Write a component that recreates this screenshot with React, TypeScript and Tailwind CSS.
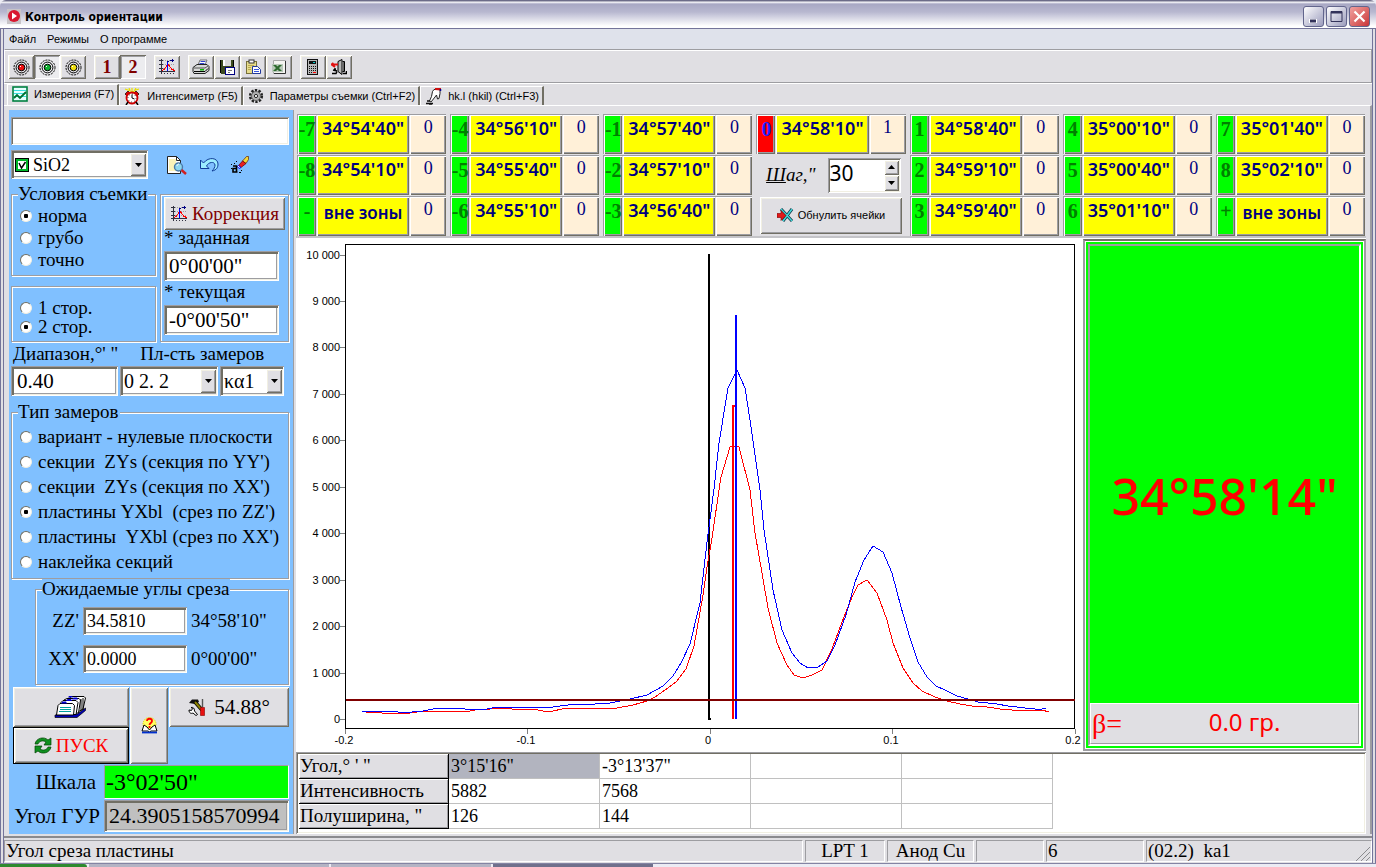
import type { ReactNode } from "react";

const RAISED =
  "bg-[#e0dfe3] shadow-[inset_1px_1px_0_#ffffff,inset_-1px_-1px_0_#716f64,inset_2px_2px_0_#f1efe2,inset_-2px_-2px_0_#9d9da1]";
const PRESSED =
  "bg-[#ececef] shadow-[inset_1px_1px_0_#716f64,inset_-1px_-1px_0_#ffffff,inset_2px_2px_0_#9d9da1]";
const SUNKEN =
  "shadow-[inset_1px_1px_0_#9d9da1,inset_-1px_-1px_0_#ffffff,inset_2px_2px_0_#716f64,inset_-2px_-2px_0_#f1efe2]";
const FIELD =
  "shadow-[inset_1px_1px_0_#9d9da1,inset_-1px_-1px_0_#ffffff,inset_3px_3px_0_#716f64,inset_-2px_-2px_0_#f1efe2,inset_-3px_-3px_0_#9d9da1]";
const ETCHED = "border border-[#9d9da1] shadow-[1px_1px_0_#ffffff,inset_1px_1px_0_#ffffff]";
const SERIF = "font-['Liberation_Serif',serif]";
const ROUND = "font-['Noto_Sans',sans-serif]";

/* ---------- icons ---------- */

function Target({ color }: { color: string }) {
  return (
    <svg width="17" height="17" viewBox="0 0 17 17" fill="none" stroke="#000">
      <circle cx="8.5" cy="8.5" r="7.5" strokeDasharray="2 1" />
      <circle cx="8.5" cy="8.5" r="5.4" />
      <circle cx="8.5" cy="8.5" r="3.3" fill={color} />
      <path d="M7 8l1-1" stroke="#fff" />
    </svg>
  );
}

function GraphIcon() {
  return (
    <svg width="18" height="18" viewBox="0 0 18 18" fill="none" shapeRendering="crispEdges">
      <path d="M5 2.500h12M5 6.500h12M5 10.500h12" stroke="#a0a0a8" strokeDasharray="1 1" />
      <path d="M3.500 1v15M1 13.500h16M1 2.500h4M1 6.500h4M1 10.500h4" stroke="#303040" />
      <path d="M6.500 13v4M9.500 13v4M12.500 13v4M15.500 13v4" stroke="#303040" strokeDasharray="1 1" />
      <path d="M4 12.500l2-1 4-5.500 4 5.500 3 1" stroke="#f00" />
      <path d="M9.500 3v10" stroke="#00f" />
      <path d="M8.500 3.500h2M12 2.500h4M14.500 1v3" stroke="#000080" />
    </svg>
  );
}

function PrinterIcon() {
  return (
    <svg width="18" height="16" viewBox="0 0 18 16">
      <path d="M6 6l2-5h7l-2 5z" fill="#fff" stroke="#777" />
      <path d="M8.500 2.500h5M7.500 4.500h5" stroke="#3344cc" />
      <path d="M1 8.500l4-3h10l2 2v4l-4 3H2l-1-2z" fill="#d8d8d8" stroke="#222" />
      <path d="M2 9h11l3-2" fill="none" stroke="#555" />
      <path d="M2 12.500h11l3-3" fill="none" stroke="#000" />
      <rect x="8" y="10" width="4" height="1.500" fill="#0b0" />
    </svg>
  );
}

function SaveIcon() {
  return (
    <svg width="17" height="17" viewBox="0 0 17 17" shapeRendering="crispEdges">
      <path d="M1 1h14v14H2l-1-1z" fill="#3c4a1e" />
      <path d="M1 1h1v13H1zM14 1h1v8h-1z" fill="#000" />
      <rect x="4" y="1" width="8" height="6" fill="#d8d8d8" />
      <rect x="4" y="1" width="2" height="6" fill="#fff" />
      <rect x="6" y="8" width="10" height="8" fill="#000080" />
      <rect x="7" y="9" width="8" height="6" fill="#fff" />
      <path d="M9 11h4v1H9zM9 13h2v1H9z" fill="#777" />
    </svg>
  );
}

function PasteIcon() {
  return (
    <svg width="17" height="16" viewBox="0 0 17 16">
      <rect x="1.500" y="2.500" width="10" height="12" fill="#e6dc8c" stroke="#77703a" />
      <rect x="4" y="1" width="5" height="3" fill="#fff" stroke="#333" />
      <path d="M3 6.500h6M3 8.500h3M3 10.500h3" stroke="#b8a850" />
      <path d="M7.500 7.500h5l3 3v4h-8z" fill="#fff" stroke="#223a9c" />
      <path d="M9 10.500h5M9 12.500h5" stroke="#3355dd" />
    </svg>
  );
}

function ExcelIcon() {
  return (
    <svg width="16" height="16" viewBox="0 0 16 16">
      <path d="M2.500 1.500h12v13h-12z" fill="#f4f4f0" stroke="#a8a8a8" />
      <path d="M14.500 2v12.500H3" fill="none" stroke="#333" />
      <rect x="1" y="5" width="11" height="8" fill="#b8c8b8" />
      <path d="M2 6h3l6 6H8zM8 6h3l-6 6H2z" fill="#2e6b2e" />
    </svg>
  );
}

function CalcIcon() {
  return (
    <svg width="12" height="17" viewBox="0 0 12 17" shapeRendering="crispEdges">
      <rect width="11" height="16" fill="#111" />
      <rect x="1" y="1" width="9" height="14" fill="#b8b8b8" />
      <rect x="2" y="2" width="7" height="3" fill="#111" />
      <rect x="6" y="3" width="2" height="1" fill="#0cc" />
      <path d="M2 7.500h8M2 9.500h8M2 11.500h8M2 13.500h4" stroke="#111" strokeDasharray="1 1" />
      <rect x="6" y="13" width="3" height="1" fill="#f00" />
    </svg>
  );
}

function ExitIcon() {
  return (
    <svg width="16" height="16" viewBox="0 0 16 16">
      <path d="M7 2.500l4-2v15l-4-3z" fill="#b8b8b8" stroke="#000" />
      <path d="M11.500 2.500h2v10h-2" fill="#666" stroke="#000" />
      <path d="M0 5.500h7M2.500 4l-2 1.500L4 8" stroke="#e01010" strokeWidth="2" fill="none" />
      <path d="M1 14.500h4l1-2M2 11l4 1M4 9v3M12 14.500h3.500V12" stroke="#000" strokeWidth="1.500" fill="none" />
    </svg>
  );
}

function MeasureIcon() {
  return (
    <svg width="16" height="16" viewBox="0 0 16 16" fill="none">
      <rect x="1" y="1" width="14" height="14" fill="#e6ffff" stroke="#008040" strokeWidth="1.600" />
      <path d="M2 4.500h12M2 7.500h12M2 10.500h12" stroke="#38e0e0" />
      <path d="M2 12l3-3 3 3 6-6" stroke="#007030" strokeWidth="1.800" />
    </svg>
  );
}

function AlarmIcon() {
  return (
    <svg width="17" height="17" viewBox="0 0 17 17">
      <path d="M1 1l14 5M3 5l12-4M8 0v5M5 0l2 5M12 0l-3 5" stroke="#e8e000" strokeWidth="1.200" />
      <path d="M1 6l3-3 2 2-3 3zM15 6l-3-3-2 2 3 3z" fill="#e00000" stroke="#000" strokeWidth=".7" />
      <circle cx="8" cy="10" r="5.500" fill="#fff" stroke="#d00000" strokeWidth="1.800" />
      <path d="M8 6.500V10l2.500 1" stroke="#000" fill="none" />
      <circle cx="8" cy="10" r="4" fill="none" stroke="#000" strokeDasharray=".7 2.400" />
      <path d="M4 14l-2 3M12 14l2 3" stroke="#000" strokeWidth="1.500" />
    </svg>
  );
}

function GearIcon() {
  return (
    <svg width="16" height="16" viewBox="0 0 16 16" fill="none">
      <circle cx="8" cy="8" r="5.600" stroke="#222" strokeWidth="3" strokeDasharray="2.200 1.320" />
      <circle cx="8" cy="8" r="4.500" fill="#b0b0b0" stroke="#666" />
      <circle cx="8" cy="8" r="1.600" fill="#fff" stroke="#222" />
    </svg>
  );
}

function HandIcon() {
  return (
    <svg width="17" height="17" viewBox="0 0 17 17" fill="none">
      <path d="M9 1.500h6v4l-1 5-1.500.5-1-4-1.500 2-4 5-1.500-1 2-4.500 1-5z" fill="#fff" stroke="#222" />
      <path d="M10 0h6v2.500l-6-.5z" fill="#d01010" />
      <path d="M15.500 1v2" stroke="#000090" strokeWidth="1.500" />
      <path d="M1 15.500h7M2 13h3M4 16h3" stroke="#111" strokeWidth="1.400" />
    </svg>
  );
}

function CheckBoxIcon() {
  return (
    <svg width="14" height="14" viewBox="0 0 14 14">
      <rect x=".5" y=".5" width="13" height="13" fill="#fff" stroke="#000" />
      <rect x="2" y="2" width="10" height="10" fill="#fff" stroke="#00b828" strokeWidth="2" />
      <path d="M4 5l2.500 5L10.500 4" fill="none" stroke="#000" strokeWidth="1.500" />
    </svg>
  );
}

function PreviewIcon() {
  return (
    <svg width="22" height="20" viewBox="0 0 22 20">
      <path d="M1.500 1.500h9l4 4v13h-13z" fill="#fff" stroke="#222" />
      <path d="M3 4h7v12H3z" fill="#fbf3b8" />
      <path d="M10.500 1.500v4h4" fill="none" stroke="#222" />
      <circle cx="12.500" cy="12" r="4" fill="#8fd8f0" stroke="#4a7aa8" strokeWidth="1.400" />
      <path d="M11 11c0-1 1-2 2-2" stroke="#fff" fill="none" />
      <path d="M15.500 15l4.500 4" stroke="#d02020" strokeWidth="2.400" />
    </svg>
  );
}

function UndoIcon() {
  return (
    <svg width="20" height="18" viewBox="0 0 20 18">
      <path d="M1.500 4v8.500h8.500L7.500 10c2-4 8-5 8.500-1 0 2-1 4-3 6 5-1 6-4 6-7 0-6-9-8-14.500-1z" fill="#9cecff" stroke="#103c98" />
    </svg>
  );
}

function EraseIcon() {
  return (
    <svg width="19" height="18" viewBox="0 0 19 18">
      <path d="M12.500 5l4-4.500h2v3L16 7.500z" fill="#f4d838" stroke="#602000" strokeWidth=".7" />
      <path d="M8.500 9.500L12.500 5 16 7.500l-5 4z" fill="#e82020" stroke="#600" strokeWidth=".7" />
      <path d="M8.500 9.500l-1 1 1.500 2 2-1z" fill="#fff" stroke="#00f" />
      <path d="M3 10h3.500v6M6 12.500H3V16h4.500" fill="none" stroke="#000" strokeWidth="1.600" />
      <path d="M1 8.500h1M4 7.500h1M9 16.500h2M11 14.500h1M1 12.500h1M6 5.500h1" stroke="#000" />
    </svg>
  );
}

function CardsIcon() {
  return (
    <svg width="34" height="24" viewBox="0 0 34 24">
      <path d="M1 20v2.500h22l8.500-7V13l-8 6z" fill="#0000b8" stroke="#000" strokeWidth=".7" />
      <path d="M14 5.500L17 1.500h13l1.500 1.500-2.500 11-7 4z" fill="#fff" stroke="#000" />
      <path d="M10 5l3-1.500h12l1.500 1.500-2 13H16z" fill="#fff" stroke="#000" />
      <path d="M7 7.500l2-2h13l2 2-2 12H8z" fill="#fff" stroke="#000" />
      <path d="M2.500 20L4 10.500l2-2h12.500l2 2-1 9.500z" fill="#fff" stroke="#000" />
      <path d="M29 3v12M27 4v12" stroke="#000" />
      <path d="M6 12.500h11M6 14.500h11M5 16.500h12" stroke="#00a0a0" strokeWidth="1.200" />
      <path d="M7 8.500h6l-1-2H8.500zM12 6h6l-1-2h-3.500zM18 4.500h6l-1-2h-3.500zM14 2.500h5l-1-1.500h-3z" fill="#0000d0" />
    </svg>
  );
}

function RefreshIcon() {
  return (
    <svg width="18" height="17" viewBox="0 0 18 17">
      <path d="M1 7c1-6 9-8 13-4l3-2v7h-7l2-3C9 3 5 4 4 7z" fill="#109020" stroke="#004400" strokeWidth=".7" />
      <path d="M17 10c-1 6-9 8-13 4l-3 2V9h7l-2 3c3 2 7 1 8-2z" fill="#109020" stroke="#004400" strokeWidth=".7" />
    </svg>
  );
}

function HelpBookIcon() {
  return (
    <svg width="17" height="17" viewBox="0 0 17 17">
      <circle cx="8.500" cy="7" r="6.500" fill="#ffff60" stroke="#d8d000" strokeDasharray="1 1" />
      <path d="M3 8l-2 6h6l1.500 1 1.500-1h6l-2-6-3 2-2.500 3L6 10z" fill="#fff" stroke="#000" />
      <path d="M1 15.500h15" stroke="#0030d0" strokeWidth="1.800" />
      <path d="M6 4c0-3 5-3 5 0 0 2-2.500 2-2.500 4M8.500 9v2" fill="none" stroke="#f00" strokeWidth="1.800" />
    </svg>
  );
}

function ToolsIcon() {
  return (
    <svg width="18" height="18" viewBox="0 0 18 18">
      <path d="M1 5l3-3.500h6l1 2.500-4 2z" fill="#111" />
      <path d="M7 4l7 8" stroke="#000" strokeWidth="3.600" />
      <path d="M7 4l7 8" stroke="#8a8000" strokeWidth="2" />
      <path d="M14.500 1v8" stroke="#555" strokeWidth="1.400" />
      <path d="M12.500 9.500h4v8h-4z" fill="#e81010" stroke="#800" strokeWidth=".6" />
      <path d="M3 9.500l1.500 1-1 2L1 12c0 3 2 4 4 3l3 2.500 1.500-1L6.500 13c0-3-1.500-4-3.500-3.500z" fill="#fff" stroke="#000" />
    </svg>
  );
}

function ClearIcon() {
  return (
    <svg width="17" height="15" viewBox="0 0 17 15">
      <path d="M4 1l11 12M15 1L6 13" stroke="#134" strokeWidth="3" />
      <path d="M4 1l11 12M15 1L6 13" stroke="#40d8d8" strokeWidth="1.500" />
      <path d="M0 5.500h4V2.500l5 5-5 5v-3H0z" fill="#e01818" stroke="#700" strokeWidth=".6" />
    </svg>
  );
}

function AppIcon() {
  return (
    <svg width="14" height="15" viewBox="0 0 14 15">
      <rect width="14" height="15" fill="#c8c4c8" />
      <circle cx="7" cy="7" r="6" fill="#d81830" />
      <path d="M5 3.500v7l5-3.500z" fill="#fff" />
    </svg>
  );
}

/* ---------- small controls ---------- */

function ToolButton({ label, pressed, children }: { label: string; pressed?: boolean; children: ReactNode }) {
  return (
    <button
      type="button"
      aria-label={label}
      aria-pressed={pressed}
      className={`flex h-6 w-[26px] items-center justify-center ${pressed ? PRESSED : RAISED}`}
    >
      {children}
    </button>
  );
}

function Radio({ name, label, checked, height }: { name: string; label: string; checked?: boolean; height: string }) {
  return (
    <label className={`flex items-center gap-[6px] whitespace-pre pl-2 ${height}`}>
      <input
        type="radio"
        name={name}
        defaultChecked={checked}
        className="size-3 shrink-0 appearance-none rounded-full border border-b-[#f1efe2] border-l-[#716f64] border-r-[#f1efe2] border-t-[#716f64] bg-white checked:bg-[radial-gradient(circle,#000_0_2px,#fff_2.5px)]"
      />
      {label}
    </label>
  );
}

function Combo({ label, value, width, text = "text-xl", lead }: { label: string; value: string; width: string; text?: string; lead?: ReactNode }) {
  return (
    <div className={`relative flex items-center bg-white ${width} ${FIELD}`}>
      {lead}
      <select aria-label={label} className={`h-[29px] w-full min-w-0 appearance-none bg-transparent pl-1 leading-none ${text}`}>
        <option>{value}</option>
      </select>
      <span className={`pointer-events-none absolute inset-y-[3px] right-[2px] flex w-4 items-center justify-center ${RAISED}`}>
        <svg width="7" height="4" viewBox="0 0 7 4">
          <path d="M0 0h7L3.500 4z" />
        </svg>
      </span>
    </div>
  );
}

/* ---------- side panel ---------- */

function SidePanel() {
  return (
    <aside className={`w-[285px] shrink-0 border-r border-[#9d9da1] bg-[#80c0ff] pb-px pl-[2px] pr-1 pt-[7px] text-[19px] leading-5 ${SERIF}`}>
      <input aria-label="Имя" className={`block h-7 w-full bg-white px-2 ${SUNKEN}`} />

      <div className="mt-[5px] flex h-[29px] items-center">
        <Combo label="Материал" value="SiO2" width="w-[137px]" text="text-lg" lead={<span className="ml-1 shrink-0"><CheckBoxIcon /></span>} />
        <div className="ml-[18px] flex items-center gap-[11px]">
          <button type="button" aria-label="Просмотр"><PreviewIcon /></button>
          <button type="button" aria-label="Отменить"><UndoIcon /></button>
          <button type="button" aria-label="Очистить"><EraseIcon /></button>
        </div>
      </div>

      <div className="mt-[5px] flex justify-between">
        <div className="w-[145px]">
          <fieldset className={`pb-1 pt-px ${ETCHED}`}>
            <legend className="relative ml-[6px] whitespace-nowrap bg-[#80c0ff] pr-px">Условия съемки</legend>
            <Radio name="mode" label="норма" checked height="h-[22px]" />
            <Radio name="mode" label="грубо" height="h-[22px]" />
            <Radio name="mode" label="точно" height="h-[22px]" />
          </fieldset>
          <div className={`mt-[10px] pb-[5px] pt-[11px] ${ETCHED}`}>
            <Radio name="side" label="1 стор." height="h-[19px]" />
            <Radio name="side" label="2 стор." checked height="h-[19px]" />
          </div>
        </div>
        <div className={`mt-[10px] w-[129px] px-[3px] pb-[6px] pt-[2px] ${ETCHED}`}>
          <button type="button" className={`flex h-[33px] w-full items-center justify-center gap-1 text-[#800000] ${RAISED}`}>
            <GraphIcon />
            Коррекция
          </button>
          <label className="block">
            <span className="block h-[17px] leading-4">* заданная</span>
            <input defaultValue={"0°00'00\""} className={`mt-1 block h-[30px] w-[115px] bg-white px-[5px] text-[21px] ${FIELD}`} />
          </label>
          <label className="mt-[3px] block">
            <span className="block h-[17px] leading-4">* текущая</span>
            <input defaultValue={"-0°00'50\""} className={`mt-1 block h-[30px] w-[115px] bg-white px-[5px] text-[21px] ${FIELD}`} />
          </label>
        </div>
      </div>

      <div className="mt-[2px] flex gap-[22px] pl-[2px]">
        <label htmlFor="range">Диапазон,°' "</label>
        <span>Пл-сть замеров</span>
      </div>
      <div className="mt-[2px] flex h-[30px] gap-[2px]">
        <input id="range" defaultValue="0.40" className={`w-[107px] bg-white px-[6px] text-[21px] ${FIELD}`} />
        <Combo label="Плоскость" value="0 2. 2" width="w-[98px]" />
        <Combo label="Линия" value="κα1" width="w-[64px]" />
      </div>

      <fieldset className={`mt-[6px] pb-1 pt-[2px] ${ETCHED}`}>
        <legend className="relative ml-[6px] bg-[#80c0ff] pr-px">Тип замеров</legend>
        <Radio name="kind" label="вариант - нулевые плоскости" height="h-[25px]" />
        <Radio name="kind" label="секции  ZYs (секция по YY')" height="h-[25px]" />
        <Radio name="kind" label="секции  ZYs (секция по XX')" height="h-[25px]" />
        <Radio name="kind" label="пластины YXbl  (срез по ZZ')" checked height="h-[25px]" />
        <Radio name="kind" label="пластины  YXbl (срез по XX')" height="h-[25px]" />
        <Radio name="kind" label="наклейка секций" height="h-[25px]" />
      </fieldset>

      <fieldset className={`ml-6 pb-[10px] pt-[7px] ${ETCHED}`}>
        <legend className="relative ml-[6px] bg-[#80c0ff] pr-px">Ожидаемые углы среза</legend>
        {[
          { id: "zz", name: "ZZ'", value: "34.5810", angle: "34°58'10\"" },
          { id: "xx", name: "XX'", value: "0.0000", angle: "0°00'00\"" },
        ].map((row) => (
          <div key={row.id} className="mb-2 flex h-[30px] items-center gap-1 last:mb-0">
            <label htmlFor={row.id} className="w-[43px] text-right">{row.name}</label>
            <input id={row.id} defaultValue={row.value} className={`h-7 w-[104px] bg-white px-1 text-lg ${FIELD}`} />
            <span>{row.angle}</span>
          </div>
        ))}
      </fieldset>

      <div className="mt-[2px] flex h-[77px] gap-px pl-[2px]">
        <div className="flex w-[116px] flex-col">
          <button type="button" aria-label="Картотека" className={`flex h-10 items-center justify-center ${RAISED}`}>
            <CardsIcon />
          </button>
          <button type="button" className={`flex h-[37px] items-center justify-center gap-1 border border-black text-[#ff0000] ${RAISED}`}>
            <RefreshIcon />
            ПУСК
          </button>
        </div>
        <button type="button" aria-label="Справка" className={`flex w-[38px] items-center justify-center ${RAISED}`}>
          <HelpBookIcon />
        </button>
        <button type="button" className={`flex h-10 flex-1 items-center justify-center gap-2 text-[21px] ${RAISED}`}>
          <ToolsIcon />
          54.88°
        </button>
      </div>

      <div className="mt-px flex items-center text-[21px]">
        <label htmlFor="scale" className="flex-1 pr-2 text-right">Шкала</label>
        <input id="scale" readOnly defaultValue={"-3°02'50\""} className="h-[34px] w-[185px] border border-b-white border-l-[#9d9da1] border-r-white border-t-[#9d9da1] bg-[#00ff00] px-px text-2xl" />
      </div>
      <div className="mt-px flex items-center text-[21px]">
        <label htmlFor="gur" className="flex-1 whitespace-nowrap pr-1 text-right">Угол ГУР</label>
        <input id="gur" readOnly defaultValue="24.3905158570994" className={`h-8 w-[185px] bg-[#c0c0c0] px-[5px] text-[22px] ${FIELD}`} />
      </div>
    </aside>
  );
}

/* ---------- counter cells ---------- */

function Cell({ id, angle, count = "0", active }: { id: string; angle: string; count?: string; active?: boolean }) {
  const isZone = angle === "вне зоны";
  return (
    <div className="flex h-10 min-w-0 gap-px border-l border-t border-[#9d9da1] text-[#000080]">
      <div className={`flex w-[18px] justify-center overflow-hidden pt-[2px] text-xl font-bold leading-6 ${SERIF} ${active ? "bg-[#ff0000] text-[#2020ff]" : "bg-[#00ff00] text-[#008000]"} shadow-[inset_1px_1px_0_#fff,inset_-1px_-1px_0_#716f64,inset_-2px_-2px_0_#9d9da1]`}>
        {id}
      </div>
      <div className={`flex min-w-0 flex-1 justify-center whitespace-nowrap bg-[#ffff00] font-semibold leading-6 ${isZone ? "pt-1 text-[17px]" : "pt-px text-lg leading-6"} ${ROUND} shadow-[inset_1px_1px_0_#fff,inset_-1px_-1px_0_#716f64,inset_-2px_-2px_0_#9d9da1]`}>
        {angle}
      </div>
      <div className={`flex w-9 justify-center bg-[#fff0d8] pt-[2px] text-lg leading-5 ${SERIF} shadow-[inset_1px_1px_0_#fff,inset_-1px_-1px_0_#716f64,inset_-2px_-2px_0_#9d9da1]`}>
        {count}
      </div>
    </div>
  );
}

function CounterGrid() {
  return (
    <div className="grid grid-cols-7 gap-x-1 gap-y-px border-b-2 border-[#c4c4c8] bg-[#e0dfe3] px-px pt-1">
      <Cell id="-7" angle={"34°54'40\""} />
      <Cell id="-4" angle={"34°56'10\""} />
      <Cell id="-1" angle={"34°57'40\""} />
      <Cell id="0" angle={"34°58'10\""} count="1" active />
      <Cell id="1" angle={"34°58'40\""} />
      <Cell id="4" angle={"35°00'10\""} />
      <Cell id="7" angle={"35°01'40\""} />

      <Cell id="-8" angle={"34°54'10\""} />
      <Cell id="-5" angle={"34°55'40\""} />
      <Cell id="-2" angle={"34°57'10\""} />
      <div className="flex items-center justify-end gap-3 pr-[5px]">
        <label htmlFor="step" className={`text-[19px] italic leading-5 ${SERIF}`}>
          <span className="underline">Ш</span>аг,"
        </label>
        <div className={`flex h-[35px] w-[73px] items-center bg-white p-[2px] ${SUNKEN}`}>
          <input id="step" defaultValue="30" className={`w-0 min-w-0 flex-1 pb-1 text-[21px] leading-none ${ROUND}`} />
          <div className="flex h-full w-[15px] flex-col">
            <button type="button" aria-label="Больше" className={`flex flex-1 items-center justify-center ${RAISED}`}>
              <svg width="7" height="4" viewBox="0 0 7 4"><path d="M0 4h7L3.500 0z" /></svg>
            </button>
            <button type="button" aria-label="Меньше" className={`flex flex-1 items-center justify-center ${RAISED}`}>
              <svg width="7" height="4" viewBox="0 0 7 4"><path d="M0 0h7L3.500 4z" /></svg>
            </button>
          </div>
        </div>
      </div>
      <Cell id="2" angle={"34°59'10\""} />
      <Cell id="5" angle={"35°00'40\""} />
      <Cell id="8" angle={"35°02'10\""} />

      <Cell id="-" angle="вне зоны" />
      <Cell id="-6" angle={"34°55'10\""} />
      <Cell id="-3" angle={"34°56'40\""} />
      <div className="py-px pl-1 pr-1">
        <button type="button" className={`flex h-[37px] w-full items-center justify-center gap-1 whitespace-nowrap text-[11px] ${RAISED}`}>
          <ClearIcon />
          Обнулить ячейки
        </button>
      </div>
      <Cell id="3" angle={"34°59'40\""} />
      <Cell id="6" angle={"35°01'10\""} />
      <Cell id="+" angle="вне зоны" />
    </div>
  );
}

/* ---------- chart ---------- */

const BLUE =
  "362,711 392,711 398,712 412,712 423,711 433,709 449,708 457,708 465,709 487,709 497,707 512,708 523,707 538,708 553,707 568,705 595,704 610,703 620,701 630,699 647,695 663,686 673,676 681,663 690,644 700,603 707,542 714,489 719,443 728,388 737,370 745,388 750,420 754,448 760,490 764,530 773,590 782,630 792,653 800,663 808,668 818,667 827,661 835,645 846,615 855,582 864,560 873,546 883,552 892,573 901,607 910,638 918,662 927,677 936,686 945,690 957,696 968,699 978,702 997,704 1008,706 1025,708 1035,709 1042,709 1046,708";
const RED =
  "366,713 378,712 382,713 397,713 410,713 417,712 435,711 470,711 475,710 490,709 503,708 512,709 533,709 543,711 553,711 562,709 580,708 617,708 633,705 647,701 655,697 665,690 676,682 686,669 694,646 703,595 707,567 712,538 719,490 721,477 730,447 733,446 739,447 750,490 755,533 762,573 768,608 777,643 787,665 794,675 803,678 812,675 822,670 832,649 842,622 852,597 858,585 867,580 877,593 887,620 893,643 903,668 913,683 922,691 935,697 947,701 960,704 972,706 987,707 1000,709 1012,710 1033,711 1042,710 1049,712";
const Y_TICKS = ["0", "1 000", "2 000", "3 000", "4 000", "5 000", "6 000", "7 000", "8 000", "9 000", "10 000"];
const X_TICKS = ["-0.2", "-0.1", "0", "0.1", "0.2"];

function Chart() {
  return (
    <svg viewBox="296 238 787 513" className="block min-w-0 flex-1 bg-white" role="img" aria-label="Интенсивность">
      <g fill="none" shapeRendering="crispEdges">
        <rect x="345.5" y="244.500" width="729" height="484" stroke="#000" />
        {Y_TICKS.map((t, i) => (
          <path key={t} d={`M340 ${Math.round(719 - i * 46.45) + 0.5}h5`} stroke="#808080" />
        ))}
        {X_TICKS.map((t, i) => (
          <path key={t} d={`M${Math.round(345 + i * 182.4) + 0.5} 729v5`} stroke="#808080" />
        ))}
        <path d="M709 254v465h2" stroke="#000" strokeWidth="2" />
        <polyline points={RED} stroke="#f00" />
        <polyline points={BLUE} stroke="#00f" />
        <path d="M735 406h-2v313" stroke="#f00" strokeWidth="2" />
        <path d="M736 315v404" stroke="#00f" strokeWidth="2" />
        <path d="M346 700h729" stroke="#800000" strokeWidth="2" />
      </g>
      <g className="font-['Liberation_Sans',sans-serif] text-[11px]">
        {Y_TICKS.map((t, i) => (
          <text key={t} x="340" y={Math.round(723 - i * 46.45)} textAnchor="end">{t}</text>
        ))}
        {X_TICKS.map((t, i) => (
          <text key={t} x={Math.round(344 + i * 182.2)} y="744" textAnchor="middle">{t}</text>
        ))}
      </g>
    </svg>
  );
}

/* ---------- result ---------- */

function Result() {
  return (
    <section className={`mt-px flex w-[283px] shrink-0 border-2 border-b-[#9d9da1] border-l-[#9d9da1] border-r-[#9d9da1] border-t-[#716f64] bg-white p-px text-[#ff0000] ${ROUND}`}>
      <div className="flex flex-1 flex-col border-2 border-[#00ff00]">
        <div className="flex flex-1 flex-col border-2 border-b-white border-l-[#9d9da1] border-r-white border-t-[#9d9da1]">
          <div className="flex flex-1 items-center justify-center whitespace-nowrap bg-[#00ff00] pt-11 text-[50px] font-medium">
            34°58'14"
          </div>
          <div className="flex h-[41px] items-center border border-b-[#9d9da1] border-l-white border-r-[#9d9da1] border-t-white bg-[#e0dfe3]">
            <span className={`w-11 pl-px text-[28px] leading-none ${SERIF}`}>β=</span>
            <span className="flex-1 pb-1 pr-1 text-center text-2xl leading-none">0.0 гр.</span>
          </div>
        </div>
      </div>
    </section>
  );
}

function PeakTable() {
  const rows = [
    ["Угол,° ' \"", "3°15'16\"", "-3°13'37\""],
    ["Интенсивность", "5882", "7568"],
    ["Полуширина, \"", "126", "144"],
  ];
  return (
    <div className={`mt-px h-[82px] bg-white py-[2px] pl-[3px] pr-[2px] ${SUNKEN}`}>
      <table className={`table-fixed border-separate border-spacing-0 text-lg leading-5 ${SERIF}`}>
        <tbody>
          {rows.map((row, r) => (
            <tr key={row[0]} className="h-[25px]">
              <th scope="row" className="w-[150px] whitespace-nowrap border-b border-r border-black bg-[#e0dfe3] px-px text-left text-[19px] font-normal leading-5 shadow-[inset_1px_1px_0_#fff,inset_-1px_-1px_0_#9d9da1]">
                {row[0]}
              </th>
              {[1, 2, 3, 4].map((c) => (
                <td key={c} className={`w-[151px] border-b border-r border-[#c0c0c0] px-[2px] ${r === 0 && c === 1 ? "bg-[#b2b4bf]" : ""}`}>
                  {row[c] ?? ""}
                </td>
              ))}
            </tr>
          ))}
        </tbody>
      </table>
    </div>
  );
}

/* ---------- window ---------- */

const CAPTION = "flex size-[21px] items-center justify-center rounded-[3px] border border-[#62658c]";

function TitleBar() {
  return (
    <header className="flex h-[29px] items-center gap-1 rounded-t-[6px] border-b border-[#74749a] bg-[linear-gradient(to_bottom,#6c6c88_0,#6c6c88_1px,#ffffff_2px,#a8a8c4_4px,#b8b8d0_12px,#ffffff_26px,#ffffff_28px)] pl-[7px] pr-[6px] pt-[5px]">
      <AppIcon />
      <h1 className="flex-1 font-['DejaVu_Sans_Condensed','DejaVu_Sans',sans-serif] text-xs font-bold">Контроль ориентации</h1>
      <div className="flex gap-[2px]">
        <button type="button" aria-label="Свернуть" className={`bg-linear-to-br from-white to-[#9c9cbc] ${CAPTION}`}>
          <svg width="15" height="15" viewBox="0 0 15 15"><path d="M3 12h8" stroke="#fff" strokeWidth="4" /><path d="M4 12h6" stroke="#33335a" strokeWidth="3" /></svg>
        </button>
        <button type="button" aria-label="Развернуть" className={`bg-linear-to-br from-white to-[#9c9cbc] ${CAPTION}`}>
          <svg width="15" height="15" viewBox="0 0 15 15" fill="none"><path d="M2 2.500h11v10H2z" stroke="#33335a" /><path d="M2 3.500h11" stroke="#33335a" strokeWidth="2" /></svg>
        </button>
        <button type="button" aria-label="Закрыть" className={`bg-linear-to-br from-[#f0a0a0] to-[#c83038] ${CAPTION}`}>
          <svg width="15" height="15" viewBox="0 0 15 15"><path d="M2.500 2.500l10 10M12.500 2.500l-10 10" stroke="#fff" strokeWidth="2.200" /></svg>
        </button>
      </div>
    </header>
  );
}

const TABS = [
  { text: "Измерения (F7)", icon: <MeasureIcon /> },
  { text: "Интенсиметр (F5)", icon: <AlarmIcon /> },
  { text: "Параметры съемки (Ctrl+F2)", icon: <GearIcon /> },
  { text: "hk.l (hkil) (Ctrl+F3)", icon: <HandIcon /> },
];

const STATUS_CELL = "flex h-[22px] items-center whitespace-pre border border-b-white border-l-[#9d9da1] border-r-white border-t-[#9d9da1] px-px";

export default function App() {
  return (
    <div className="flex min-h-screen flex-col bg-[#ececf4] font-['Liberation_Sans',sans-serif] text-[11px] text-black">
      <div className="flex flex-1 flex-col rounded-t-[7px] border-b border-[#8484a4]">
        <TitleBar />
        <div className="flex flex-1 flex-col border-l-4 border-r-4 border-double border-[#74749a] bg-[#e0dfe3]">
          <nav className="flex h-5 items-center gap-[11px] bg-[#dfe2eb] pl-[5px] leading-4">
            <a href="#file">Файл</a>
            <a href="#modes">Режимы</a>
            <a href="#about">О программе</a>
          </nav>

          <div role="toolbar" className="flex h-[34px] items-center gap-2 border border-b-[#9d9da1] border-l-white border-r-[#9d9da1] border-t-[#9d9da1] pl-[3px] pt-[2px] shadow-[inset_0_1px_0_#fff,0_1px_0_#fff]">
            <div className="flex">
              <ToolButton label="Красный"><Target color="#f01010" /></ToolButton>
              <ToolButton label="Зелёный" pressed><Target color="#10b030" /></ToolButton>
              <ToolButton label="Жёлтый"><Target color="#f0e010" /></ToolButton>
            </div>
            <div className={`flex text-lg font-bold leading-none text-[#800000] ${SERIF}`}>
              <ToolButton label="1">1</ToolButton>
              <ToolButton label="2" pressed>2</ToolButton>
            </div>
            <ToolButton label="График"><GraphIcon /></ToolButton>
            <div className="flex">
              <ToolButton label="Печать"><PrinterIcon /></ToolButton>
              <ToolButton label="Сохранить"><SaveIcon /></ToolButton>
              <ToolButton label="Вставить"><PasteIcon /></ToolButton>
              <ToolButton label="Excel"><ExcelIcon /></ToolButton>
            </div>
            <div className="flex">
              <ToolButton label="Калькулятор"><CalcIcon /></ToolButton>
              <ToolButton label="Выход"><ExitIcon /></ToolButton>
            </div>
          </div>

          <div role="tablist" className="flex h-[22px] items-end pl-[3px] pt-px">
            {TABS.map((tab, i) => (
              <button
                key={tab.text}
                type="button"
                role="tab"
                aria-selected={i === 0}
                className={`flex items-center gap-[6px] whitespace-nowrap border-l border-r-2 border-t border-l-white border-r-[#716f64] border-t-white pl-1 pr-[3px] ${i === 0 ? "h-[21px] pb-[2px]" : "h-[19px]"}`}
              >
                {tab.icon}
                {tab.text}
              </button>
            ))}
          </div>

          <main className="flex flex-1 border-r-2 border-t border-r-[#9d9da1] border-t-white pl-[5px] pr-1 pt-1">
            <SidePanel />
            <div className="ml-[2px] flex min-w-0 flex-1 flex-col bg-white">
              <CounterGrid />
              <div className="flex flex-1">
                <Chart />
                <Result />
              </div>
              <PeakTable />
            </div>
          </main>

          <footer className={`mt-[2px] flex gap-[2px] border-t-2 border-[#8a8a8e] pb-px pt-[2px] text-[19px] leading-5 ${SERIF}`}>
            <div className={`min-w-0 flex-1 ${STATUS_CELL}`}>Угол среза пластины</div>
            <div className={`w-[80px] justify-center ${STATUS_CELL}`}>LPT 1</div>
            <div className={`w-[87px] justify-center ${STATUS_CELL}`}>Анод Cu</div>
            <div className={`w-[68px] ${STATUS_CELL}`} />
            <div className={`w-[98px] ${STATUS_CELL}`}>6</div>
            <div className={`w-[226px] justify-between ${STATUS_CELL}`}>
              {"(02.2)  ka1"}
              <svg width="14" height="14" viewBox="0 0 14 14" className="self-end" stroke="#8a8a8e">
                <path d="M0 14L14 0M5 14l9-9M10 14l4-4" />
              </svg>
            </div>
          </footer>
        </div>
      </div>
      <div className="flex h-[3px] gap-[2px]">
        <div className="w-[87px] rounded-tr-[3px] bg-[#2f8a2f]" />
        <div className="w-[240px] bg-[#b4b4c4]" />
        <div className="w-[160px] bg-[#b4b4c4]" />
        <div className="w-[160px] bg-[#70708c]" />
      </div>
    </div>
  );
}
